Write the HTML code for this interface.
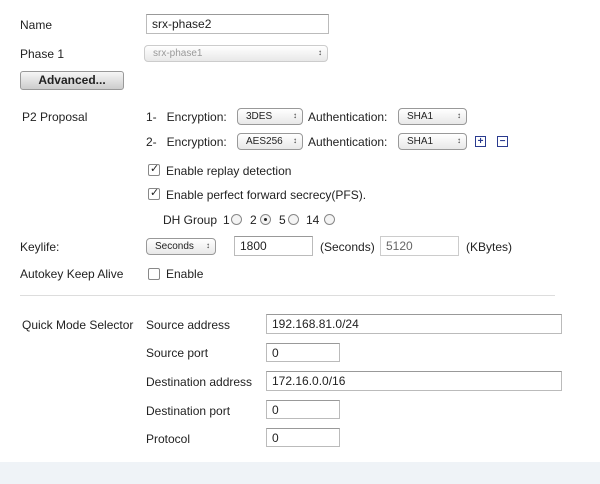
<!DOCTYPE html>
<html><head><style>
body{margin:0;width:600px;height:484px;background:#fff;position:relative;overflow:hidden;font-family:"Liberation Sans",sans-serif;font-size:12px;color:#222}
.t{position:absolute;line-height:14px;white-space:nowrap}
.in{position:absolute;border:1px solid #bbb;border-top-color:#999;background:#fff;box-sizing:border-box;padding-left:5px;font-size:12px;display:flex;align-items:center}
.sel{position:absolute;border:1px solid #999;border-radius:4px;background:linear-gradient(#fff,#e8e8e8);box-sizing:border-box;padding-left:8px;font-size:10px;display:flex;align-items:center}
.sel:after{content:"\2195";position:absolute;right:5px;top:2px;font-size:8px;color:#333}
.cb{position:absolute;width:10px;height:10px;border:1px solid #888;border-radius:2px;background:#fff;font-size:11px;line-height:9px;text-indent:1px}
.rd{position:absolute;width:9px;height:9px;border:1px solid #888;border-radius:50%;background:#f4f4f4}
.ic{position:absolute;width:9px;height:9px;border:1px solid #2a3b8f;font-size:10px;line-height:9px;text-align:center;color:#2a3b8f;font-weight:bold}
</style></head><body>
<div class="t" style="left:20px;top:18px">Name</div>
<div class="in" style="left:146px;top:14px;width:183px;height:20px">srx-phase2</div>
<div class="t" style="left:20px;top:47px">Phase 1</div>
<div class="sel" style="left:144px;top:45px;width:184px;height:17px;color:#999;border-color:#ccc">srx-phase1</div>
<div style="position:absolute;left:20px;top:71px;width:104px;height:19px;border:1px solid #999;border-radius:3px;box-sizing:border-box;background:linear-gradient(#f6f6f6,#ccc);font-weight:bold;text-align:center;line-height:17px">Advanced...</div>
<div class="t" style="left:22px;top:110px">P2 Proposal</div>
<div class="t" style="left:146px;top:110px">1-&nbsp;&nbsp; Encryption:</div>
<div class="sel" style="left:237px;top:108px;width:66px;height:17px">3DES</div>
<div class="t" style="left:308px;top:110px">Authentication:</div>
<div class="sel" style="left:398px;top:108px;width:69px;height:17px">SHA1</div>
<div class="t" style="left:146px;top:135px">2-&nbsp;&nbsp; Encryption:</div>
<div class="sel" style="left:237px;top:133px;width:66px;height:17px">AES256</div>
<div class="t" style="left:308px;top:135px">Authentication:</div>
<div class="sel" style="left:398px;top:133px;width:69px;height:17px">SHA1</div>
<div class="ic" style="left:475px;top:136px">+</div>
<div class="ic" style="left:497px;top:136px">−</div>
<div class="cb" style="left:148px;top:164px">✓</div>
<div class="t" style="left:166px;top:164px">Enable replay detection</div>
<div class="cb" style="left:148px;top:188px">✓</div>
<div class="t" style="left:166px;top:188px">Enable perfect forward secrecy(PFS).</div>
<div class="t" style="left:163px;top:213px">DH Group</div>
<div class="t" style="left:223px;top:213px">1</div>
<div class="rd" style="left:231px;top:214px"></div>
<div class="t" style="left:250px;top:213px">2</div>
<div class="rd" style="left:260px;top:214px"><div style="position:absolute;left:3px;top:3px;width:3px;height:3px;border-radius:50%;background:#222"></div></div>
<div class="t" style="left:279px;top:213px">5</div>
<div class="rd" style="left:288px;top:214px"></div>
<div class="t" style="left:306px;top:213px">14</div>
<div class="rd" style="left:324px;top:214px"></div>
<div class="t" style="left:20px;top:240px">Keylife:</div>
<div class="sel" style="left:146px;top:238px;width:70px;height:17px">Seconds</div>
<div class="in" style="left:234px;top:236px;width:79px;height:20px">1800</div>
<div class="t" style="left:320px;top:240px">(Seconds)</div>
<div class="in" style="left:380px;top:236px;width:79px;height:20px;color:#666;border-color:#ccc">5120</div>
<div class="t" style="left:466px;top:240px">(KBytes)</div>
<div class="t" style="left:20px;top:267px">Autokey Keep Alive</div>
<div class="cb" style="left:148px;top:268px"></div>
<div class="t" style="left:166px;top:267px">Enable</div>
<div style="position:absolute;left:20px;top:295px;width:535px;height:1px;background:#ddd"></div>
<div class="t" style="left:22px;top:318px">Quick Mode Selector</div>
<div class="t" style="left:146px;top:318px">Source address</div>
<div class="in" style="left:266px;top:314px;width:296px;height:20px">192.168.81.0/24</div>
<div class="t" style="left:146px;top:346px">Source port</div>
<div class="in" style="left:266px;top:343px;width:74px;height:19px">0</div>
<div class="t" style="left:146px;top:375px">Destination address</div>
<div class="in" style="left:266px;top:371px;width:296px;height:20px">172.16.0.0/16</div>
<div class="t" style="left:146px;top:404px">Destination port</div>
<div class="in" style="left:266px;top:400px;width:74px;height:19px">0</div>
<div class="t" style="left:146px;top:432px">Protocol</div>
<div class="in" style="left:266px;top:428px;width:74px;height:19px">0</div>
<div style="position:absolute;left:0;top:462px;width:600px;height:22px;background:#eff3f7"></div>
</body></html>
